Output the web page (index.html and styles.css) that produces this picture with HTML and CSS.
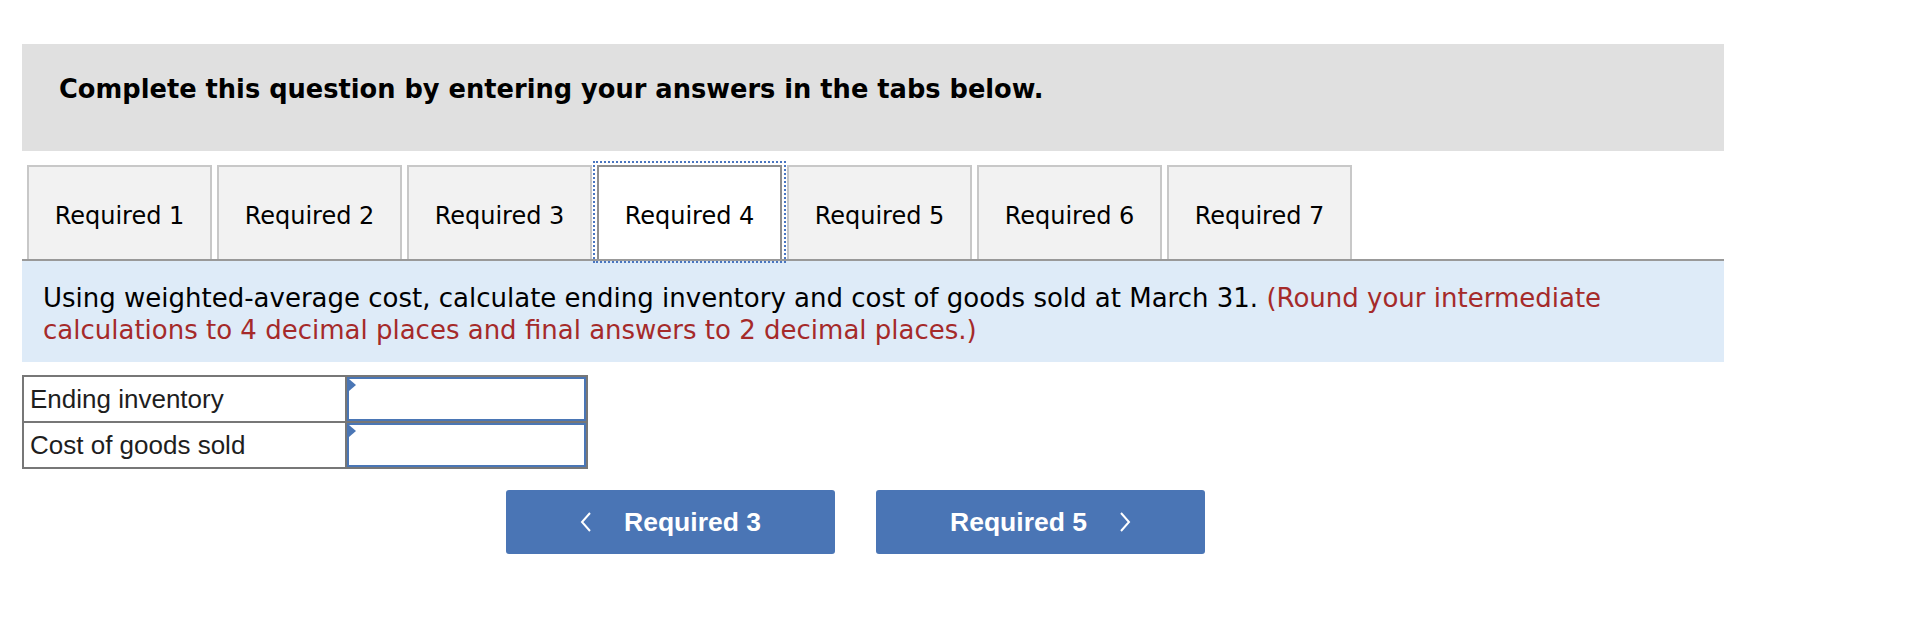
FILE: index.html
```html
<!DOCTYPE html>
<html lang="en">
<head>
<meta charset="utf-8">
<title>Required 4</title>
<link rel="stylesheet" href="styles.css">
</head>
<body>
<div class="page">
  <div class="banner">Complete this question by entering your answers in the tabs below.</div>
  <div class="tabs">
    <div class="tab">Required 1</div>
    <div class="tab">Required 2</div>
    <div class="tab">Required 3</div>
    <div class="tab active">Required 4</div>
    <div class="tab">Required 5</div>
    <div class="tab">Required 6</div>
    <div class="tab">Required 7</div>
  </div>
  <div class="prompt">Using weighted-average cost, calculate ending inventory and cost of goods sold at March 31. <span class="note">(Round your intermediate calculations to 4 decimal places and final answers to 2 decimal places.)</span></div>
  <table class="answers">
    <tr>
      <td class="label">Ending inventory</td>
      <td class="field"><span class="marker"></span><input class="entry" type="text"></td>
    </tr>
    <tr>
      <td class="label">Cost of goods sold</td>
      <td class="field"><span class="marker"></span><input class="entry" type="text"></td>
    </tr>
  </table>
  <div class="nav">
    <button class="navbtn" type="button"><svg class="chev" width="12" height="20" viewBox="0 0 12 20"><polyline points="10,1 2,10 10,19" fill="none" stroke="#fff" stroke-width="2"/></svg><span>Required 3</span></button>
    <button class="navbtn" type="button"><span>Required 5</span><svg class="chev" width="12" height="20" viewBox="0 0 12 20"><polyline points="2,1 10,10 2,19" fill="none" stroke="#fff" stroke-width="2"/></svg></button>
  </div>
</div>
</body>
</html>
```

FILE: styles.css
```css
html, body {
  margin: 0;
  padding: 0;
  background: #ffffff;
}

.page {
  width: 1702px;
  padding: 44px 0 0 22px;
}

.banner {
  height: 107px;
  box-sizing: border-box;
  padding: 30px 37px 0;
  background: #e0e0e0;
  color: #000;
  font-family: "DejaVu Sans", Verdana, sans-serif;
  font-weight: bold;
  font-size: 25.7px;
  line-height: 30px;
}

.tabs {
  display: flex;
  height: 94px;
  margin-top: 14px;
  border-bottom: 2px solid #999999;
}

.tab {
  width: 185px;
  box-sizing: border-box;
  margin-left: 5px;
  padding-top: 5px;
  background: #f2f2f2;
  border: 2px solid #c8c8c8;
  border-bottom: 0;
  display: flex;
  align-items: center;
  justify-content: center;
  color: #000;
  font-family: "DejaVu Sans", Verdana, sans-serif;
  font-size: 24px;
}

.tab.active {
  background: #ffffff;
  border-color: #8f8f8f;
  outline: 2px dotted #4a76c0;
  outline-offset: 2px;
  position: relative;
  z-index: 1;
}

.prompt {
  background: #deebf8;
  padding: 21px 21px 16px;
  color: #000;
  font-family: "DejaVu Sans", Verdana, sans-serif;
  font-size: 26px;
  line-height: 32px;
}

.note {
  color: #a52a2a;
}

.answers {
  margin-top: 13px;
  border-collapse: collapse;
  border: 2px solid #777777;
}

.answers td {
  border: 2px solid #777777;
  height: 44px;
  padding: 0;
  vertical-align: middle;
}

.answers td.label {
  width: 315px;
  padding: 0 0 0 6px;
  color: #1e1e1e;
  font-family: "Liberation Sans", Arial, sans-serif;
  font-size: 26px;
}

.field {
  width: 239px;
  position: relative;
}

.entry {
  display: block;
  width: 100%;
  height: 44px;
  box-sizing: border-box;
  margin: 0;
  border: 2px solid #4a76b5;
  background: #fff;
  font-family: "Liberation Sans", Arial, sans-serif;
  font-size: 22px;
}

.marker {
  position: absolute;
  left: 2px;
  top: 2px;
  width: 0;
  height: 0;
  border-left: 7px solid #4a76b5;
  border-top: 6px solid transparent;
  border-bottom: 6px solid transparent;
}

.nav {
  display: flex;
  gap: 41px;
  margin: 21px 0 0 484px;
}

.navbtn {
  width: 329px;
  height: 64px;
  padding: 0;
  border: 0;
  border-radius: 3px;
  background: #4a75b5;
  color: #fff;
  display: flex;
  align-items: center;
  justify-content: center;
  gap: 32px;
  font-family: "Liberation Sans", Arial, sans-serif;
  font-weight: bold;
  font-size: 26.5px;
}

.chev {
  display: block;
}
```
